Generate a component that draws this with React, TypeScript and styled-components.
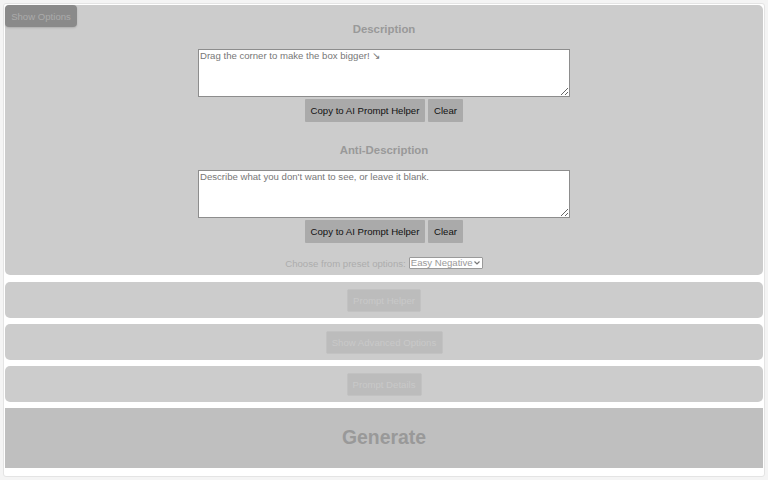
import React from "react";
import styled, { createGlobalStyle } from "styled-components";

const Global = createGlobalStyle`
  html, body { margin: 0; padding: 0; background: #f4f4f4; }
  body { font-family: "Liberation Sans", Arial, sans-serif; }
  * { box-sizing: border-box; }
`;

const Shell = styled.div`
  position: relative;
  margin: 3px;
  height: 474px;
  background: #ffffff;
  border: 1px solid #e4e4e4;
  border-radius: 3px;
  padding: 1px 1px 8px 1px;
  display: flex;
  flex-direction: column;
  gap: 6px;
`;

const ShowOptions = styled.button`
  position: absolute;
  left: 1px;
  top: 1px;
  width: 72px;
  height: 22px;
  border: none;
  border-radius: 4px;
  background: #8a8a8a;
  color: #ababab;
  font-family: "Liberation Sans", Arial, sans-serif;
  font-size: 9.6px;
  white-space: nowrap;
  padding: 0;
  box-shadow: 0 1px 2px rgba(0, 0, 0, 0.15);
`;

const Panel = styled.section<{ $h: number }>`
  height: ${(p) => p.$h}px;
  background: #cccccc;
  border-radius: 5px;
  display: flex;
  flex-direction: column;
  align-items: center;
`;

const MainPanel = styled(Panel)`
  padding-top: 17px;
  margin-bottom: 1px;
`;

const CenterPanel = styled(Panel)`
  justify-content: center;
`;

const Label = styled.div<{ $top?: number }>`
  font-weight: bold;
  font-size: 11.4px;
  color: #999999;
  height: 14px;
  line-height: 14px;
  margin-top: ${(p) => p.$top ?? 0}px;
`;

const Area = styled.textarea`
  width: 372px;
  height: 48px;
  margin-top: 13px;
  border: 1px solid #8d8d8d;
  background: #ffffff;
  font-family: "Liberation Sans", Arial, sans-serif;
  font-size: 9.6px;
  padding: 0 1px;
  color: #333;
  resize: both;
  outline: none;
  &::placeholder { color: #777777; }
`;

const ButtonRow = styled.div`
  display: flex;
  gap: 3px;
  margin-top: 2px;
`;

const SmallButton = styled.button<{ $w: number }>`
  width: ${(p) => p.$w}px;
  height: 23px;
  border: none;
  background: #aaaaaa;
  color: #111111;
  font-family: "Liberation Sans", Arial, sans-serif;
  font-size: 9.6px;
  white-space: nowrap;
  padding: 0;
  border-radius: 1px;
`;

const PresetRow = styled.div`
  display: flex;
  align-items: center;
  gap: 3px;
  margin-top: 14px;
  font-size: 9.6px;
  color: #adadad;
`;

const SelectWrap = styled.div`
  position: relative;
  width: 74px;
  height: 12px;
`;

const Select = styled.select`
  appearance: none;
  -webkit-appearance: none;
  display: block;
  height: 12px;
  width: 74px;
  font-family: "Liberation Sans", Arial, sans-serif;
  font-size: 9.6px;
  line-height: 10px;
  color: #999999;
  background: #ffffff;
  border: 1px solid #9a9a9a;
  padding: 0 0 0 1px;
  border-radius: 1px;
  outline: none;
`;

const Chevron = styled.svg`
  position: absolute;
  right: 3px;
  top: 4px;
  width: 6px;
  height: 4px;
  pointer-events: none;
`;

const GhostButton = styled.button<{ $w: number }>`
  width: ${(p) => p.$w}px;
  height: 23px;
  border: 1px solid #c2c2c2;
  background: #bcbcbc;
  color: #c9c9c9;
  font-family: "Liberation Sans", Arial, sans-serif;
  font-size: 9.6px;
  white-space: nowrap;
  padding: 0;
  border-radius: 2px;
`;

const Generate = styled.button`
  height: 60px;
  width: 100%;
  border: none;
  background: #bfbfbf;
  color: #999999;
  font-family: "Liberation Sans", Arial, sans-serif;
  font-weight: bold;
  font-size: 19.4px;
  padding: 0 0 2px 0;
`;

export default function App() {
  return (
    <>
      <Global />
      <Shell>
        <MainPanel $h={270}>
          <Label>Description</Label>
          <Area placeholder="Drag the corner to make the box bigger! ↘" />
          <ButtonRow>
            <SmallButton $w={120}>Copy to AI Prompt Helper</SmallButton>
            <SmallButton $w={35}>Clear</SmallButton>
          </ButtonRow>
          <Label $top={21}>Anti-Description</Label>
          <Area placeholder="Describe what you don't want to see, or leave it blank." />
          <ButtonRow>
            <SmallButton $w={120}>Copy to AI Prompt Helper</SmallButton>
            <SmallButton $w={35}>Clear</SmallButton>
          </ButtonRow>
          <PresetRow>
            Choose from preset options:
            <SelectWrap>
              <Select defaultValue="easy">
                <option value="easy">Easy Negative</option>
              </Select>
              <Chevron viewBox="0 0 6 4">
                <path d="M0.5 0.5 L3 3 L5.5 0.5" fill="none" stroke="#777" strokeWidth="1.2" />
              </Chevron>
            </SelectWrap>
          </PresetRow>
        </MainPanel>
        <CenterPanel $h={36}>
          <GhostButton $w={74}>Prompt Helper</GhostButton>
        </CenterPanel>
        <CenterPanel $h={36}>
          <GhostButton $w={117}>Show Advanced Options</GhostButton>
        </CenterPanel>
        <CenterPanel $h={36}>
          <GhostButton $w={75}>Prompt Details</GhostButton>
        </CenterPanel>
        <Generate>Generate</Generate>
        <ShowOptions>Show Options</ShowOptions>
      </Shell>
    </>
  );
}
